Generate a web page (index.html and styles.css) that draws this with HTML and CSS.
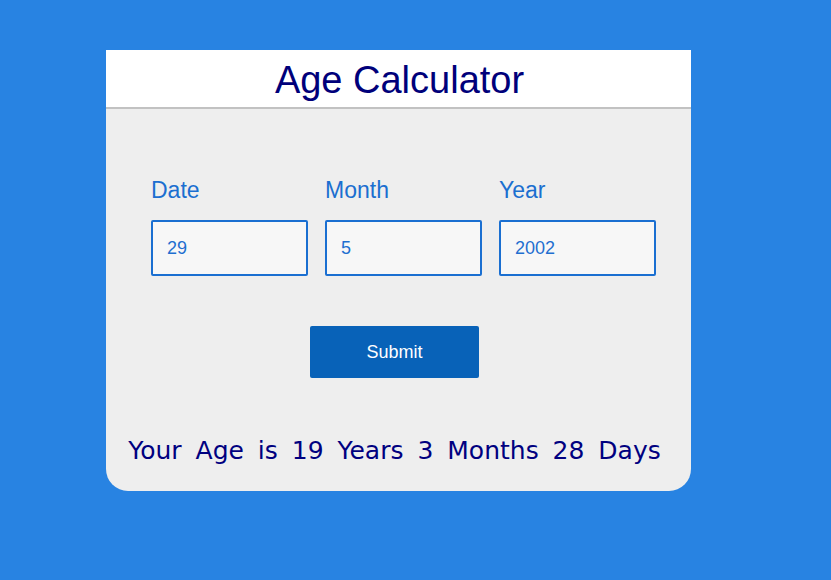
FILE: index.html
```html
<!DOCTYPE html>
<html lang="en">
<head>
<meta charset="utf-8">
<title>Age Calculator</title>
<link rel="stylesheet" href="styles.css">
</head>
<body>
<div class="card">
  <div class="header"><h1 class="title">Age Calculator</h1></div>
  <div class="body">
    <div class="fields">
      <div class="field">
        <label class="label" for="d">Date</label>
        <input class="input" id="d" type="text" value="29">
      </div>
      <div class="field">
        <label class="label" for="m">Month</label>
        <input class="input" id="m" type="text" value="5">
      </div>
      <div class="field">
        <label class="label" for="y">Year</label>
        <input class="input" id="y" type="text" value="2002">
      </div>
    </div>
    <div class="actions"><button class="submit" type="button">Submit</button></div>
    <p class="result">Your Age is 19 Years 3 Months 28 Days</p>
  </div>
</div>
</body>
</html>
```
FILE: styles.css
```css
html, body {
  margin: 0;
  padding: 0;
}
body {
  background: #2883e2;
  font-family: "Liberation Sans", Arial, sans-serif;
  min-height: 580px;
  padding-top: 50px;
  padding-left: 106px;
  box-sizing: border-box;
}
.card {
  width: 585px;
  height: 441px;
  background: #eeeeee;
  border-radius: 0 0 22px 22px;
  overflow: hidden;
}
.header {
  background: #ffffff;
  height: 57px;
  border-bottom: 2px solid #c2c2c2;
  display: flex;
  align-items: center;
  justify-content: center;
}
.title {
  margin: 0;
  font-weight: normal;
  font-size: 38px;
  color: #00007a;
  line-height: 1;
  position: relative;
  top: 1px;
  left: 1px;
}
.body {
  padding-top: 68px;
}
.fields {
  display: flex;
  gap: 17px;
  padding-left: 45px;
}
.field {
  display: flex;
  flex-direction: column;
  width: 157px;
}
.label {
  font-size: 23px;
  color: #1b6fd0;
  line-height: 26px;
  margin-bottom: 17px;
}
.input {
  box-sizing: border-box;
  width: 157px;
  height: 56px;
  border: 2px solid #1a6fd1;
  border-radius: 2px;
  background: #f7f7f7;
  padding: 0 14px;
  font-family: "Liberation Sans", Arial, sans-serif;
  font-size: 18px;
  color: #1f6fd0;
  outline: none;
}
.actions {
  display: flex;
  justify-content: center;
  padding-right: 8px;
  margin-top: 50px;
}
.submit {
  width: 169px;
  height: 52px;
  border: none;
  border-radius: 2px;
  background: #0862b8;
  color: #ffffff;
  font-family: "Liberation Sans", Arial, sans-serif;
  font-size: 18px;
}
.result {
  margin: 58px 0 0;
  padding-right: 8px;
  text-align: center;
  font-family: "DejaVu Sans", Verdana, sans-serif;
  font-size: 25px;
  line-height: 30px;
  word-spacing: 6px;
  color: #000080;
}
```
